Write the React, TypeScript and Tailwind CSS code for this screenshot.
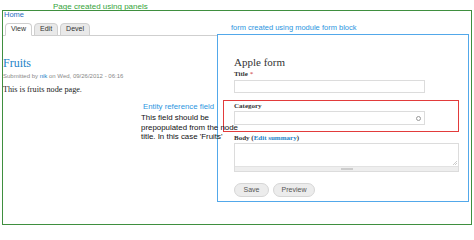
const sans = "font-['Liberation_Sans',Arial,sans-serif]";
const serif = "font-['Liberation_Serif',Georgia,serif]";

const Tab = ({ label, active }: { label: string; active?: boolean }) => (
  <li
    className={
      "mr-[2px] flex h-[13px] items-center rounded-t-[4px] border border-[#cfcfcf] px-[5px] text-[7px] text-[#333] " +
      (active ? "-mb-px border-b-white bg-white" : "bg-[#e9e9e9]")
    }
  >
    {label}
  </li>
);

const App = () => {
  return (
    <div className={`relative h-[227px] w-[474px] overflow-hidden bg-white ${sans}`}>
      {/* annotation over the top border */}
      <div className="absolute left-[53px] top-[2px] z-10 text-[8px] leading-[10px] text-[#35a33a]">
        Page created using panels
      </div>

      <div className="ml-[2px] mt-[10px] flex h-[215px] w-[470px] border border-[#3f8f3f]">
        {/* left column */}
        <div className="flex w-[214px] shrink-0 flex-col">
          <div className="pl-[1px] text-[7.5px] leading-[8px] text-[#2a6ec0]">Home</div>
          <ul className="mt-[4px] flex h-[13px] border-b border-[#cfcfcf] pl-[2px]">
            <Tab label="View" active />
            <Tab label="Edit" />
            <Tab label="Devel" />
          </ul>
          <div className={`mt-[21px] text-[12px] leading-[13px] text-[#2383c7] ${serif}`}>Fruits</div>
          <div className="mt-[3px] text-[6px] leading-[7px] text-[#888]">
            Submitted by <span className="text-[#2383c7]">nik</span> on Wed, 09/26/2012 - 06:16
          </div>
          <div className={`mt-[5px] text-[8.2px] leading-[10px] text-[#222] ${serif}`}>
            This is fruits node page.
          </div>
          <div className="mt-[7px] pl-[140px] text-[7.8px] leading-[9px] whitespace-nowrap text-[#2b95e0]">
            Entity reference field
          </div>
          <div className="relative z-10 mt-[2px] pl-[138px] text-[7.9px] leading-[9.5px] whitespace-nowrap text-[#111]">
            <div>This field should be</div>
            <div>prepopulated from the node</div>
            <div>title. In this case 'Fruits'</div>
          </div>
        </div>

        {/* right column */}
        <div className="flex flex-col">
          <div className="pl-[14px] pt-[12px] text-[7.5px] leading-[9px] text-[#2b95e0]">
            form created using module form block
          </div>
          <div className="mt-[2px] flex h-[168px] w-[252px] flex-col border border-[#52a8ea] pl-[16px]">
            <div className={`mt-[21px] text-[11px] leading-[13px] text-[#333] ${serif}`}>Apple form</div>
            <div className={`mt-[1px] text-[7px] leading-[8px] font-bold text-[#333] ${serif}`}>
              Title <span className="font-normal text-[#c33]">*</span>
            </div>
            <div className="mt-[2px] h-[13px] w-[191px] border border-[#dcdcdc]" />

            <div className="-ml-[11px] mt-[7px] flex h-[32px] w-[236px] flex-col border border-[#e23b3b] pl-[10px]">
              <div className={`mt-[1px] text-[7px] leading-[8px] font-bold text-[#333] ${serif}`}>Category</div>
              <div className="mt-[1px] flex h-[14px] w-[191px] items-center justify-end border border-[#dcdcdc] pr-[3px]">
                <span className="h-[5px] w-[5px] rounded-full border border-[#999]" />
              </div>
            </div>

            <div className={`mt-[2px] text-[7px] leading-[8px] font-bold text-[#333] ${serif}`}>
              Body (<span className="text-[#2383c7]">Edit summary</span>)
            </div>
            <div className="mt-[1px] flex w-[225px] flex-col border border-[#dcdcdc]">
              <div className="relative h-[22px]">
                <svg className="absolute bottom-[1px] right-[1px]" width="4" height="4" viewBox="0 0 4 4">
                  <path d="M0 4 L4 0 M2 4 L4 2" stroke="#aaa" strokeWidth="0.6" />
                </svg>
              </div>
              <div className="flex h-[5px] items-center justify-center border-t border-[#e2e2e2] bg-[#eee]">
                <div className="h-[2px] w-[12px] bg-[#ccc]" />
              </div>
            </div>

            <div className="mt-[11px] flex gap-[4px]">
              <div className="flex h-[14px] w-[35px] items-center justify-center rounded-full border border-[#d6d6d6] bg-[#ececec] text-[7px] text-[#555]">
                Save
              </div>
              <div className="flex h-[14px] w-[42px] items-center justify-center rounded-full border border-[#d6d6d6] bg-[#ececec] text-[7px] text-[#555]">
                Preview
              </div>
            </div>
          </div>
        </div>
      </div>
    </div>
  );
};

export default App;
